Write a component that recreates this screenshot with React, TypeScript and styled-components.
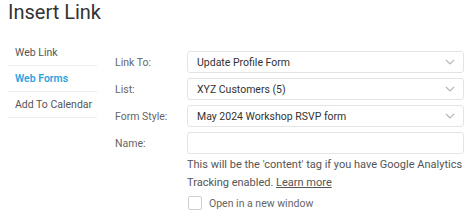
import React from "react";
import styled, { createGlobalStyle } from "styled-components";

const Global = createGlobalStyle`
  html, body { margin: 0; padding: 0; background: #fff; }
  body { font-family: Roboto, "Noto Sans", sans-serif; color: #333; }
  * { box-sizing: border-box; }
`;

const Page = styled.div`
  width: 474px;
  height: 219px;
  overflow: hidden;
  padding: 0 0 0 8px;
`;

const Title = styled.h1`
  margin: 0;
  font-size: 20px;
  font-weight: 400;
  line-height: 24px;
  color: #333;
`;

const Body = styled.div`
  display: flex;
  margin-top: 16px;
`;

const Side = styled.nav`
  width: 89px;
  display: flex;
  flex-direction: column;
`;

const SideItem = styled.div<{ $active?: boolean }>`
  height: 26px;
  padding-left: 7px;
  display: flex;
  align-items: center;
  font-size: 10.5px;
  color: ${(p) => (p.$active ? "#2ea3e0" : "#555")};
  font-weight: ${(p) => (p.$active ? 600 : 400)};
  border-bottom: 1px solid #eeeeee;
`;

const Form = styled.div`
  flex: 1;
  display: grid;
  grid-template-columns: 72px 277px;
  column-gap: 0;
  row-gap: 5px;
  margin-left: 18px;
  margin-top: 11px;
  align-items: center;
`;

const Label = styled.div`
  font-size: 10.5px;
  color: #666;
`;

const Field = styled.div`
  height: 22px;
  border: 1px solid #e4e4e4;
  border-radius: 3px;
  display: flex;
  align-items: center;
  justify-content: space-between;
  padding: 0 8px 0 9px;
  font-size: 10.5px;
  color: #333;
`;

const Help = styled.div`
  grid-column: 2;
  font-size: 11px;
  line-height: 18px;
  color: #555;
  margin-top: -3px;
`;

const HelpLink = styled.a`
  color: #555;
  text-decoration: underline;
`;

const CheckRow = styled.label`
  grid-column: 2;
  display: flex;
  align-items: center;
  gap: 7px;
  font-size: 10.5px;
  color: #666;
  margin-top: -1px;
  padding-left: 1px;
`;

const Box = styled.span`
  width: 14px;
  height: 14px;
  border: 1px solid #cfcfcf;
  border-radius: 2px;
  background: #fff;
`;

const Chevron = () => (
  <svg width="10" height="6" viewBox="0 0 10 6" fill="none">
    <path d="M1 1l4 4 4-4" stroke="#b5b5b5" strokeWidth="1.1" />
  </svg>
);

export default function App() {
  return (
    <Page>
      <Global />
      <Title>Insert Link</Title>
      <Body>
        <Side>
          <SideItem>Web Link</SideItem>
          <SideItem $active>Web Forms</SideItem>
          <SideItem>Add To Calendar</SideItem>
        </Side>
        <Form>
          <Label>Link To:</Label>
          <Field>
            Update Profile Form <Chevron />
          </Field>
          <Label>List:</Label>
          <Field>
            XYZ Customers (5) <Chevron />
          </Field>
          <Label>Form Style:</Label>
          <Field>
            May 2024 Workshop RSVP form <Chevron />
          </Field>
          <Label>Name:</Label>
          <Field />
          <Help>
            This will be the 'content' tag if you have Google Analytics
            <br />
            Tracking enabled. <HelpLink>Learn more</HelpLink>
          </Help>
          <CheckRow>
            <Box />
            Open in a new window
          </CheckRow>
        </Form>
      </Body>
    </Page>
  );
}
